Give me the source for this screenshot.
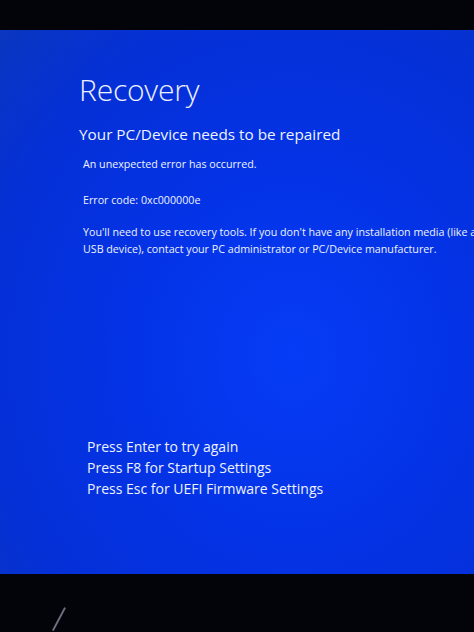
export default function App() {
  return (
    <div className="relative h-[632px] w-[474px] overflow-hidden bg-[#03030a] font-['Open_Sans','Liberation_Sans',sans-serif]">
      <div className="h-[30px]" />
      <div className="h-[544px] overflow-hidden bg-[radial-gradient(ellipse_at_62%_60%,#063cf6_0%,#0433e6_40%,#0530d6_75%,#0a36c0_100%)] pl-[79px] pt-[40px] text-[#eef2ff]">
        <h1 className="text-[30px] font-light leading-[40px] tracking-[-0.2px]">Recovery</h1>
        <p className="mt-[12px] text-[15.3px] leading-[24px]">Your PC/Device needs to be repaired</p>
        <div className="pl-[4px] text-[10.7px] leading-[17px]">
          <p className="mt-[10px]">An unexpected error has occurred.</p>
          <p className="mt-[19px]">Error code: 0xc000000e</p>
          <p className="mt-[15px] whitespace-nowrap">You'll need to use recovery tools. If you don't have any installation media (like a</p>
          <p className="whitespace-nowrap">USB device), contact your PC administrator or PC/Device manufacturer.</p>
        </div>
        <div className="mt-[178px] pl-[8px] text-[14px] leading-[21px]">
          <p>Press Enter to try again</p>
          <p>Press F8 for Startup Settings</p>
          <p>Press Esc for UEFI Firmware Settings</p>
        </div>
      </div>
      <div className="absolute bottom-0 left-[58px] h-[26px] w-[1.5px] rotate-[28deg] bg-[#9aa0b0] opacity-70" />
    </div>
  )
}
